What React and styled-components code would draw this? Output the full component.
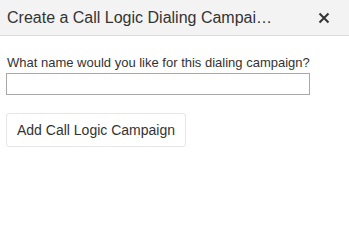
import React, { useState } from "react";
import styled, { createGlobalStyle } from "styled-components";

const GlobalStyle = createGlobalStyle`
  body {
    margin: 0;
    background: #fff;
    font-family: "Liberation Sans", Arial, sans-serif;
    color: #333;
  }
`;

export default function App() {
  const [name, setName] = useState("");

  return (
    <Dialog>
      <GlobalStyle />
      <Header>
        <Title title="Create a Call Logic Dialing Campaign">Create a Call Logic Dialing Campaign</Title>
        <CloseButton aria-label="Close">
          <svg width="12" height="12" viewBox="0 0 12 12">
            <path d="M1.5 1.5 L10.5 10.5 M10.5 1.5 L1.5 10.5" stroke="#333" strokeWidth="2" />
          </svg>
        </CloseButton>
      </Header>
      <Body>
        <Label htmlFor="campaign-name">What name would you like for this dialing campaign?</Label>
        <Input id="campaign-name" value={name} onChange={(e) => setName(e.target.value)} />
        <SubmitButton>Add Call Logic Campaign</SubmitButton>
      </Body>
    </Dialog>
  );
}

const Dialog = styled.div`
  width: 349px;
  height: 231px;
  background: #fff;
`;

const Header = styled.div`
  display: flex;
  align-items: center;
  justify-content: space-between;
  height: 36px;
  padding: 0 19px 0 7px;
  background: #f3f3f3;
  border-bottom: 1px solid #dcdcdc;
  box-sizing: border-box;
`;

const Title = styled.div`
  width: 265.5px;
  font-size: 16px;
  color: #333;
  white-space: nowrap;
  overflow: hidden;
  text-overflow: ellipsis;
`;

const CloseButton = styled.button`
  display: flex;
  align-items: center;
  justify-content: center;
  padding: 0;
  border: none;
  background: none;
  cursor: pointer;
`;

const Body = styled.div`
  display: flex;
  flex-direction: column;
  align-items: flex-start;
  padding: 19px 6px 0;
`;

const Label = styled.label`
  font-size: 13px;
  color: #333;
  margin-left: 1px;
  line-height: 16px;
`;

const Input = styled.input`
  width: 304px;
  height: 22px;
  margin-top: 2px;
  box-sizing: border-box;
  border: 1px solid #a9a9a9;
  padding: 2px 4px;
  font-family: inherit;
  font-size: 12px;
`;

const SubmitButton = styled.button`
  margin-top: 18px;
  height: 34px;
  padding: 0 10px;
  border: 1px solid #e6e6e6;
  border-radius: 3px;
  background: #fff;
  font-family: "Liberation Sans", Arial, sans-serif;
  font-size: 14px;
  color: #333;
`;
